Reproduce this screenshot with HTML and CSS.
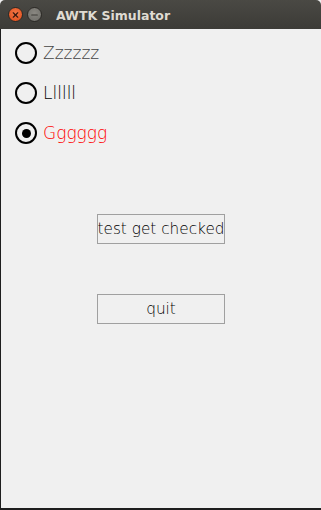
FILE: index.html
```html
<!DOCTYPE html>
<html>
<head>
<meta charset="utf-8">
<link rel="stylesheet" href="styles.css">
</head>
<body>
<div class="window">
  <div class="titlebar">
    <span class="btn close"><svg width="14" height="14" viewBox="0 0 14 14"><path d="M4.6 4.6 L9.4 9.4 M9.4 4.6 L4.6 9.4" stroke="#3a1a10" stroke-width="1.3" stroke-linecap="round"/></svg></span>
    <span class="btn min"><svg width="14" height="14" viewBox="0 0 14 14"><path d="M4 7 H10" stroke="#3c3b37" stroke-width="1.3" stroke-linecap="round"/></svg></span>
    <span class="title">AWTK Simulator</span>
  </div>
  <div class="body">
    <div class="radios">
      <div class="radio"><span class="circle"></span><span class="label gray">Zzzzzz</span></div>
      <div class="radio"><span class="circle"></span><span class="label">Llllll</span></div>
      <div class="radio"><span class="circle checked"></span><span class="label red">Gggggg</span></div>
    </div>
    <div class="buttons">
      <div class="button">test get checked</div>
      <div class="button">quit</div>
    </div>
  </div>
</div>
</body>
</html>
```
FILE: styles.css
```css
html, body {
  margin: 0;
  padding: 0;
  width: 321px;
  height: 510px;
  overflow: hidden;
  background: #f0f0f0;
}
.window {
  width: 321px;
  height: 510px;
  box-sizing: border-box;
  display: flex;
  flex-direction: column;
}
.titlebar {
  height: 29px;
  flex: none;
  background: linear-gradient(#4a4944, #3c3b37);
  display: flex;
  align-items: center;
  padding-left: 8px;
  border-radius: 5px 5px 0 0;
}
.btn {
  width: 15px;
  height: 15px;
  border-radius: 50%;
  display: flex;
  align-items: center;
  justify-content: center;
  box-sizing: border-box;
}
.btn svg { display: block; }
.close {
  background: radial-gradient(circle at 50% 40%, #f47848, #df4a16);
  border: 1px solid #2c2a26;
}
.min {
  margin-left: 4px;
  background: radial-gradient(circle at 50% 40%, #8a8882, #6c6b66);
  border: 1px solid #2c2a26;
}
.title {
  margin-left: 14px;
  font-family: "DejaVu Sans", sans-serif;
  font-weight: bold;
  font-size: 12.5px;
  color: #dfdbd2;
  padding-top: 1px;
}
.body {
  flex: 1;
  border-left: 1px solid #1e1e1e;
  border-bottom: 2px solid #1e1e1e;
  background: #f0f0f0;
}
.radios {
  padding-top: 13px;
  padding-left: 14px;
  display: flex;
  flex-direction: column;
  gap: 18px;
}
.radio {
  display: flex;
  align-items: center;
  height: 22px;
}
.circle {
  width: 22px;
  height: 22px;
  box-sizing: border-box;
  border: 2px solid #000;
  border-radius: 50%;
  display: flex;
  align-items: center;
  justify-content: center;
}
.circle.checked::after {
  content: "";
  width: 9px;
  height: 9px;
  border-radius: 50%;
  background: #000;
}
.label {
  margin-left: 6px;
  font-family: "DejaVu Sans", sans-serif;
  font-weight: 200;
  font-size: 17px;
  color: #000;
}
.label.gray { color: #444; }
.label.red { color: #ff0000; }
.buttons {
  display: flex;
  flex-direction: column;
  align-items: flex-start;
  padding-left: 96px;
  padding-top: 70px;
  gap: 50px;
}
.button {
  width: 128px;
  height: 30px;
  box-sizing: border-box;
  border: 1px solid #a0a0a0;
  display: flex;
  align-items: center;
  justify-content: center;
  font-family: "DejaVu Sans", sans-serif;
  font-weight: 200;
  font-size: 15.3px;
  color: #000;
  white-space: nowrap;
  overflow: hidden;
}
```
